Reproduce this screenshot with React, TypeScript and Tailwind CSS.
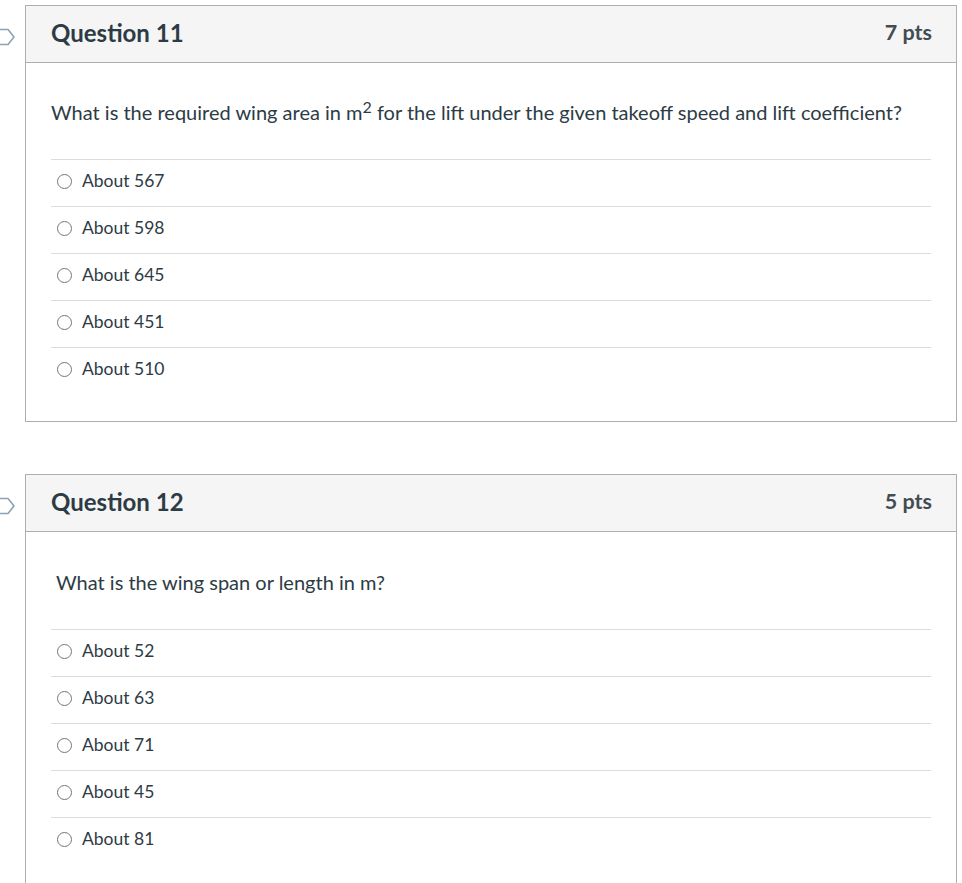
import React from 'react';

type Question = {
  id: number;
  title: string;
  points: string;
  text: React.ReactNode;
  textIndent: string;
  bodyPad: string;
  answers: string[];
};

const questions: Question[] = [
  {
    id: 11,
    title: 'Question 11',
    points: '7 pts',
    text: (
      <>
        What is the required wing area in m<sup className="relative -top-[7px] text-[16px]">2</sup> for the lift under the given takeoff speed and lift coefficient?
      </>
    ),
    textIndent: 'pl-0',
    bodyPad: 'pt-[36px] pb-[34px]',
    answers: ['About 567', 'About 598', 'About 645', 'About 451', 'About 510'],
  },
  {
    id: 12,
    title: 'Question 12',
    points: '5 pts',
    text: 'What is the wing span or length in m?',
    textIndent: 'pl-[5px]',
    bodyPad: 'pt-[37px] pb-[34px]',
    answers: ['About 52', 'About 63', 'About 71', 'About 45', 'About 81'],
  },
];

function FlagIcon() {
  return (
    <svg className="absolute left-0 top-[23px]" width="16" height="18" viewBox="0 0 16 18" fill="none">
      <path d="M-6 1.5 H8 L14 9 L8 16.5 H-6" stroke="#8ba3b6" strokeWidth="1.6" strokeLinejoin="round" />
    </svg>
  );
}

function QuestionCard({ q }: { q: Question }) {
  return (
    <div className="relative">
      <FlagIcon />
      <div className="ml-[25px] w-[932px] border border-[#aeaeae] bg-white">
        <div className="flex h-[57px] items-center justify-between border-b border-[#aeaeae] bg-[#f5f5f5] pb-[3px] pl-[25px] pr-[24px]">
          <h2 className="text-[24px] font-bold text-[#2d3b45]">{q.title}</h2>
          <span className="text-[21.5px] font-bold text-[#444c53]">{q.points}</span>
        </div>
        <div className="px-[25px] pb-[27px]">
          <div className={`${q.bodyPad} ${q.textIndent} text-[20px] leading-[26px] text-[#2d3b45]`}>{q.text}</div>
          <div>
            {q.answers.map((a) => (
              <label key={a} className="flex h-[47px] items-center border-t border-[#dcdcdc] pb-[3px] pl-[6px]">
                <span className="h-[15px] w-[15px] rounded-full border border-[#767676] bg-white" />
                <span className="ml-[10px] text-[17.5px] text-[#2d3b45]">{a}</span>
              </label>
            ))}
          </div>
        </div>
      </div>
    </div>
  );
}

export default function App() {
  return (
    <div className="h-[883px] overflow-hidden bg-white pt-[5px] font-['Lato','Noto_Sans',sans-serif]">
      <div className="flex flex-col gap-[52px]">
        {questions.map((q) => (
          <QuestionCard key={q.id} q={q} />
        ))}
      </div>
    </div>
  );
}
